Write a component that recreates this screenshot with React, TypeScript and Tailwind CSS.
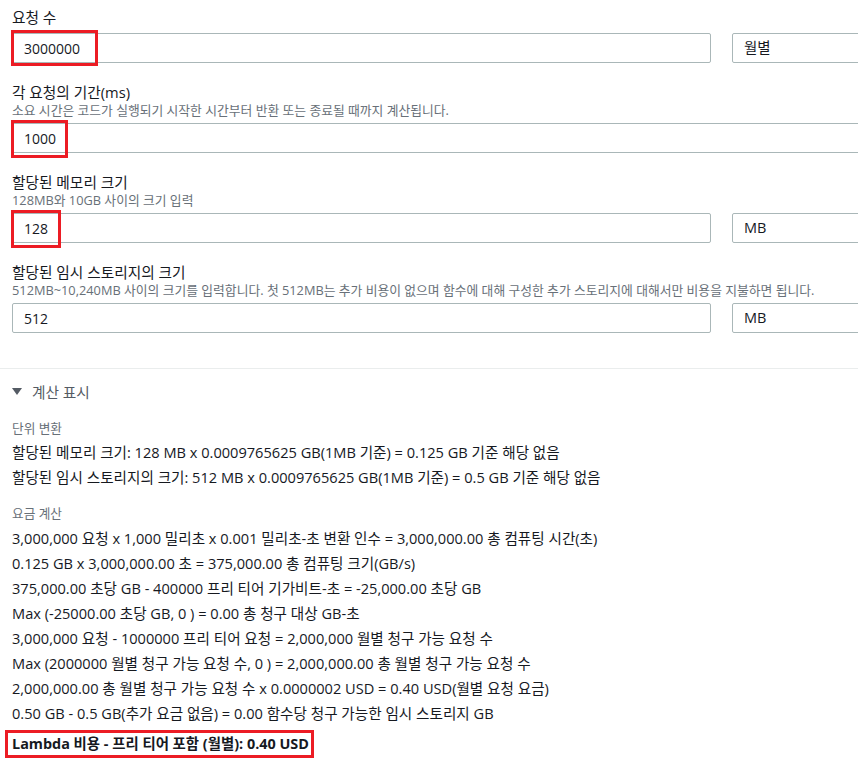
import { ReactNode } from 'react';

const FONT = { fontFamily: '"Open Sans", "Noto Sans CJK KR", sans-serif' };

function RedMark({ children, className }: { children: ReactNode; className: string }) {
  // annotation box drawn over the input value
  return (
    <span className="relative inline-block">
      {children}
      <span className={`absolute border-[3px] border-[#ec1c24] ${className}`} />
    </span>
  );
}

function Field({
  label,
  desc,
  value,
  unit,
}: {
  label: string;
  desc?: string;
  value: ReactNode;
  unit?: string;
}) {
  return (
    <div className="flex flex-col">
      <div className="text-[14.7px] leading-[22px] text-[#16191f]">{label}</div>
      {desc && (
        <div className="-mt-[1px] whitespace-nowrap text-[12.8px] leading-[16px] text-[#687078]">{desc}</div>
      )}
      <div className="mt-[5px] flex gap-[21px]">
        <div
          className={`flex h-[30px] shrink-0 items-center rounded-[2px] border border-[#aab7b8] px-[11px] text-[14px] text-[#16191f] ${
            unit ? 'w-[699px]' : 'w-[1000px]'
          }`}
        >
          {value}
        </div>
        {unit && (
          <div className="flex h-[30px] w-[300px] shrink-0 items-center rounded-[2px] border border-[#aab7b8] px-[11px] text-[14.5px] text-[#16191f]">
            {unit}
          </div>
        )}
      </div>
    </div>
  );
}

const unitLines = [
  '할당된 메모리 크기: 128 MB x 0.0009765625 GB(1MB 기준) = 0.125 GB 기준 해당 없음',
  '할당된 임시 스토리지의 크기: 512 MB x 0.0009765625 GB(1MB 기준) = 0.5 GB 기준 해당 없음',
];

const priceLines = [
  '3,000,000 요청 x 1,000 밀리초 x 0.001 밀리초-초 변환 인수 = 3,000,000.00 총 컴퓨팅 시간(초)',
  '0.125 GB x 3,000,000.00 초 = 375,000.00 총 컴퓨팅 크기(GB/s)',
  '375,000.00 초당 GB - 400000 프리 티어 기가비트-초 = -25,000.00 초당 GB',
  'Max (-25000.00 초당 GB, 0 ) = 0.00 총 청구 대상 GB-초',
  '3,000,000 요청 - 1000000 프리 티어 요청 = 2,000,000 월별 청구 가능 요청 수',
  'Max (2000000 월별 청구 가능 요청 수, 0 ) = 2,000,000.00 총 월별 청구 가능 요청 수',
  '2,000,000.00 총 월별 청구 가능 요청 수 x 0.0000002 USD = 0.40 USD(월별 요청 요금)',
  '0.50 GB - 0.5 GB(추가 요금 없음) = 0.00 함수당 청구 가능한 임시 스토리지 GB',
];

export default function App() {
  return (
    <div className="h-[759px] w-[858px] overflow-hidden bg-white" style={FONT}>
      <div className="flex flex-col gap-[18px] px-[12px] pt-[6px]">
        <Field
          label="요청 수"
          value={
            <RedMark className="-left-[13px] -right-[18px] -top-[8px] -bottom-[7px]">3000000</RedMark>
          }
          unit="월별"
        />
        <Field
          label="각 요청의 기간(ms)"
          desc="소요 시간은 코드가 실행되기 시작한 시간부터 반환 또는 종료될 때까지 계산됩니다."
          value={<RedMark className="-left-[13px] -right-[12px] -top-[8px] -bottom-[9px]">1000</RedMark>}
        />
        <Field
          label="할당된 메모리 크기"
          desc="128MB와 10GB 사이의 크기 입력"
          value={<RedMark className="-left-[13px] -right-[13px] -top-[8px] -bottom-[9px]">128</RedMark>}
          unit="MB"
        />
        <Field
          label="할당된 임시 스토리지의 크기"
          desc="512MB~10,240MB 사이의 크기를 입력합니다. 첫 512MB는 추가 비용이 없으며 함수에 대해 구성한 추가 스토리지에 대해서만 비용을 지불하면 됩니다."
          value="512"
          unit="MB"
        />
      </div>

      <div className="mt-[35px] h-px w-full bg-[#eaeded]" />

      <div className="px-[12px]">
        <div className="mt-[12px] flex h-[22px] items-center gap-[10px] text-[14.7px] text-[#545b64]">
          <svg width="10" height="8" viewBox="0 0 10 8">
            <polygon points="0,0 10,0 5,7" fill="#545b64" />
          </svg>
          <span>계산 표시</span>
        </div>

        <div className="mt-[15px] text-[12.7px] leading-[20px] text-[#687078]">단위 변환</div>
        <div className="mt-[2px] flex flex-col">
          {unitLines.map((l) => (
            <div key={l} className="whitespace-nowrap text-[14.6px] leading-[25px] text-[#16191f]">
              {l}
            </div>
          ))}
        </div>

        <div className="mt-[13px] text-[12.7px] leading-[20px] text-[#687078]">요금 계산</div>
        <div className="mt-[3px] flex flex-col">
          {priceLines.map((l) => (
            <div key={l} className="whitespace-nowrap text-[14.6px] leading-[25px] text-[#16191f]">
              {l}
            </div>
          ))}
        </div>

        <div className="-ml-[7px] mt-[4px] inline-block border-[3px] border-[#ec1c24] pl-[4px] pr-[2px] text-[14.4px] font-bold leading-[22px] text-[#16191f]">
          Lambda 비용 - 프리 티어 포함 (월별): 0.40 USD
        </div>
      </div>
    </div>
  );
}
